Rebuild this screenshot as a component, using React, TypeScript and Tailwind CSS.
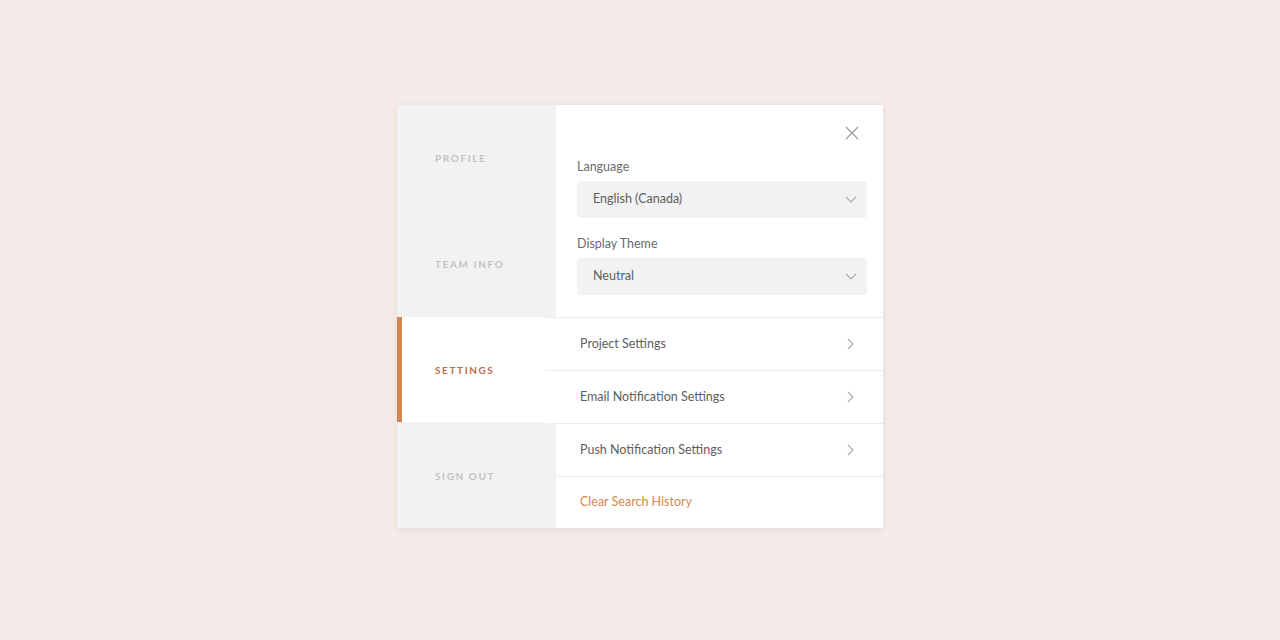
import React from 'react';

const tabs = [
  { label: 'Profile', active: false },
  { label: 'Team Info', active: false },
  { label: 'Settings', active: true },
  { label: 'Sign Out', active: false },
];

const CloseIcon = () => (
  <svg width="14" height="14" viewBox="0 0 14 14" fill="none" stroke="#9a9a9a" strokeWidth="1.2">
    <path d="M1 1 L13 13 M13 1 L1 13" />
  </svg>
);

const ChevronDown = () => (
  <svg width="12" height="7" viewBox="0 0 12 7" fill="none" stroke="#a8a8a8" strokeWidth="1.1">
    <path d="M1 1 L6 6 L11 1" />
  </svg>
);

const ChevronRight = () => (
  <svg width="7" height="12" viewBox="0 0 7 12" fill="none" stroke="#a8a8a8" strokeWidth="1.1">
    <path d="M1 1 L6 6 L1 11" />
  </svg>
);

const SelectField = ({ label, value }: { label: string; value: string }) => (
  <div>
    <div className="text-[12.5px] text-[#6b6b6b] leading-[14px] h-[14px] mb-[7px]">{label}</div>
    <div className="flex items-center justify-between h-[37px] rounded-[4px] bg-[#f2f2f2] pl-4 pr-[10px]">
      <span className="text-[12.5px] text-[#5e5e5e]">{value}</span>
      <ChevronDown />
    </div>
  </div>
);

const App = () => {
  return (
    <div
      className="w-full h-[640px] bg-[#f5ebe8] flex justify-center pt-[105px]"
      style={{ fontFamily: 'Lato, "Open Sans", sans-serif' }}
    >
      <div className="flex w-[486px] h-[423px] bg-white shadow-[0_1px_6px_rgba(160,130,120,0.18)]">
        {/* Sidebar */}
        <div className="w-[159px] flex flex-col bg-[#f2f2f2]">
          {tabs.map((tab) => (
            <div
              key={tab.label}
              className={
                tab.active
                  ? 'flex-1 flex items-center bg-white border-l-[5px] border-[#d4844f] pl-[33px]'
                  : 'flex-1 flex items-center pl-[38px]'
              }
            >
              <span
                className={
                  tab.active
                    ? 'text-[10px] font-bold uppercase tracking-[1.6px] text-[#c36a4b] pt-[2px]'
                    : 'text-[10px] font-bold uppercase tracking-[1.6px] text-[#c3c3c3] pt-[2px]'
                }
              >
                {tab.label}
              </span>
            </div>
          ))}
        </div>

        {/* Content */}
        <div className="flex-1 flex flex-col">
          <div className="h-[212px] flex flex-col pr-[16px] pl-[21px]">
            <div className="flex justify-end pt-[21px] pr-[8px] h-[55px]">
              <CloseIcon />
            </div>
            <SelectField label="Language" value="English (Canada)" />
            <div className="h-[19px]" />
            <SelectField label="Display Theme" value="Neutral" />
          </div>
          <div className="h-[53px] -ml-[11px] pl-[35px] pr-[29px] flex items-center justify-between border-t border-[#ececec] bg-white">
            <span className="text-[12.5px] text-[#5e5e5e]">Project Settings</span>
            <ChevronRight />
          </div>
          <div className="h-[53px] -ml-[11px] pl-[35px] pr-[29px] flex items-center justify-between border-t border-[#ececec] bg-white">
            <span className="text-[12.5px] text-[#5e5e5e]">Email Notification Settings</span>
            <ChevronRight />
          </div>
          <div className="h-[53px] pl-[24px] pr-[29px] flex items-center justify-between border-t border-[#ececec]">
            <span className="text-[12.5px] text-[#5e5e5e]">Push Notification Settings</span>
            <ChevronRight />
          </div>
          <div className="flex-1 pl-[24px] flex items-center border-t border-[#ececec]">
            <span className="text-[12.5px] text-[#d5884f]">Clear Search History</span>
          </div>
        </div>
      </div>
    </div>
  );
};

export default App;
